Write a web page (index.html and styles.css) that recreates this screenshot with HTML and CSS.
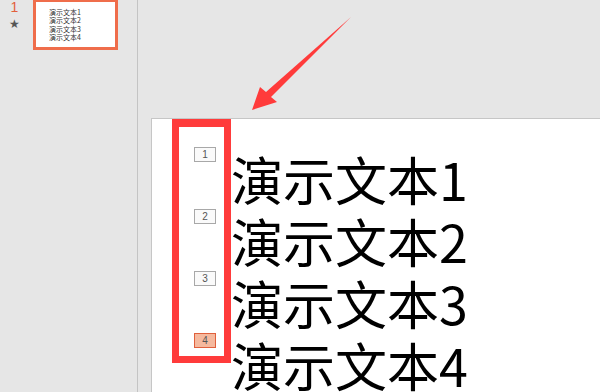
FILE: index.html
```html
<!DOCTYPE html>
<html lang="zh">
<head>
<meta charset="utf-8">
<title>演示文本</title>
<link rel="stylesheet" href="styles.css">
</head>
<body>
<div class="app">
  <aside class="pane">
    <div class="slide-item">
      <div class="slide-meta">
        <span class="slide-num">1</span>
        <span class="slide-star">★</span>
      </div>
      <div class="thumb">
        <div class="thumb-line">演示文本1</div>
        <div class="thumb-line">演示文本2</div>
        <div class="thumb-line">演示文本3</div>
        <div class="thumb-line">演示文本4</div>
      </div>
    </div>
  </aside>
  <main class="stage">
    <div class="slide">
      <div class="tags">
        <span class="tag">1</span>
        <span class="tag">2</span>
        <span class="tag">3</span>
        <span class="tag tag-active">4</span>
      </div>
      <div class="lines">
        <p class="line">演示文本1</p>
        <p class="line">演示文本2</p>
        <p class="line">演示文本3</p>
        <p class="line">演示文本4</p>
      </div>
    </div>
  </main>
  <svg class="arrow" width="600" height="392" viewBox="0 0 600 392">
    <polygon points="252,110 260,87 266,92 351,17 271,97 277,102" fill="#ff3b3b"/>
  </svg>
</div>
</body>
</html>
```
FILE: styles.css
```css
* { box-sizing: border-box; }
html, body {
  margin: 0;
  padding: 0;
  width: 600px;
  height: 392px;
  overflow: hidden;
  background: #e6e6e6;
  font-family: "Noto Sans CJK SC", "Noto Sans", sans-serif;
}
.app {
  position: relative;
  display: flex;
  width: 600px;
  height: 392px;
}
.pane {
  width: 138px;
  border-right: 1px solid #c4c4c4;
  flex: none;
}
.slide-item {
  display: flex;
}
.slide-meta {
  width: 33px;
  display: flex;
  flex-direction: column;
  align-items: center;
}
.slide-num {
  color: #e2603c;
  font-family: "Liberation Sans", sans-serif;
  font-size: 14px;
  line-height: 14px;
  margin-top: 0;
  margin-right: 4px;
}
.slide-star {
  color: #555;
  font-family: "DejaVu Sans", sans-serif;
  font-size: 12px;
  line-height: 12px;
  margin-top: 4px;
  margin-right: 4px;
}
.thumb {
  width: 85px;
  height: 50px;
  border: 3px solid #ef6d4b;
  border-top-width: 2px;
  background: #fff;
  padding: 6px 0 0 13px;
}
.thumb-line {
  font-size: 7px;
  line-height: 8.3px;
  color: #333;
  white-space: nowrap;
}
.stage {
  flex: 1;
  display: flex;
  padding: 118px 0 0 13px;
}
.slide {
  flex: 1;
  display: flex;
  align-items: flex-start;
  background: #fff;
  border-top: 1px solid #c6c6c6;
  border-left: 1px solid #c6c6c6;
  padding-left: 20px;
}
.tags {
  display: flex;
  flex-direction: column;
  gap: 47px;
  width: 59px;
  border: 7px solid #ff3b3b;
  border-top-width: 8px;
  padding: 20px 0 8px 15px;
  flex: none;
}
.tag {
  display: flex;
  align-items: center;
  justify-content: center;
  width: 22px;
  height: 15px;
  border: 1px solid #a8a8a8;
  background: #fafafa;
  color: #555;
  font-family: "Liberation Sans", sans-serif;
  font-size: 10px;
  line-height: 1;
}
.tag-active {
  background: #f5b99e;
  border-color: #e0603c;
}
.lines {
  padding-top: 29px;
}
.line {
  margin: 0;
  font-size: 52px;
  line-height: 62px;
  color: #000;
  white-space: nowrap;
}
.arrow {
  position: absolute;
  left: 0;
  top: 0;
  pointer-events: none;
}
```
